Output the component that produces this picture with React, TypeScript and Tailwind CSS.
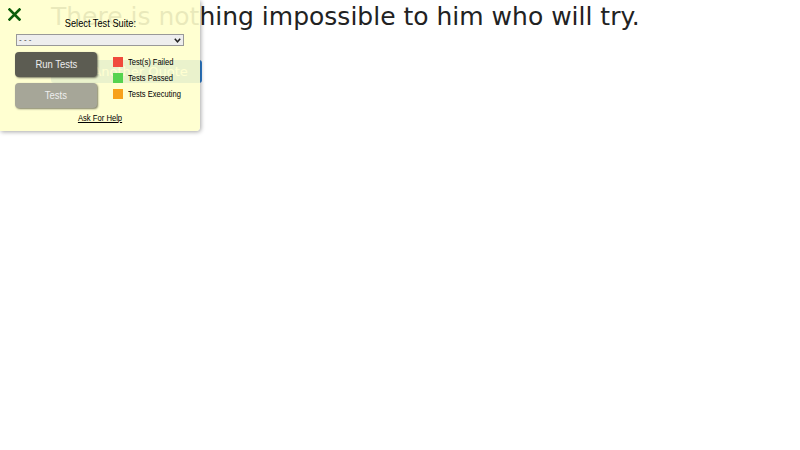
export default function App() {
  return (
    <div className="relative min-h-[450px] bg-white">
      {/* page content behind the test panel */}
      <div className="pl-[51px] pt-[1px]">
        <h1 className="text-[25px] leading-[32px] text-[#222222] font-['DejaVu_Sans',sans-serif]">
          There is nothing impossible to him who will try.
        </h1>
        <button className="mt-[27px] w-[151px] h-[23px] rounded-[3px] bg-[#2f7fd1] text-white text-[13px] font-['DejaVu_Sans',sans-serif]">
          Get Another Quote
        </button>
      </div>

      {/* test runner panel, text is a condensed arial */}
      <div className="absolute left-0 top-0 w-[200px] h-[131px] bg-[#ffffcc]/90 rounded-br-[4px] shadow-[1px_1px_4px_rgba(0,0,0,0.35)] font-['Liberation_Sans',Arial,sans-serif]">
        <svg className="absolute left-[8px] top-[8px]" width="13" height="13" viewBox="0 0 13 13">
          <path d="M1.5 1.5 L11.5 11.5 M11.5 1.5 L1.5 11.5" stroke="#0b5e0b" strokeWidth="2.6" strokeLinecap="square" />
        </svg>
        <div className="pt-[17px] text-center text-[11px] leading-[13px] text-black">
          <span className="inline-block scale-x-[0.84]">Select Test Suite:</span>
        </div>
        <div className="mt-[4px] mx-[16px] h-[12px] border border-[#999999] bg-[#eeeeee] flex items-center justify-between px-[2px]">
          <span className="text-[8px] leading-[8px] text-[#333333]">- - -</span>
          <svg width="7" height="5" viewBox="0 0 7 5">
            <path d="M0.8 0.8 L3.5 3.8 L6.2 0.8" stroke="#222" strokeWidth="1.5" fill="none" />
          </svg>
        </div>
        <div className="mt-[6px] flex pl-[15px] gap-[16px]">
          <div className="flex flex-col gap-[6px]">
            <button className="w-[82px] h-[25px] rounded-[4px] bg-[#5c5c52] text-[#eeeeee] text-[11px] shadow-[1px_1px_2px_rgba(0,0,0,0.5)]">
              <span className="inline-block scale-x-[0.86]">Run Tests</span>
            </button>
            <button className="w-[82px] h-[25px] rounded-[4px] bg-[#a6a698] text-[#eeeeee] text-[11px] shadow-[1px_1px_2px_rgba(0,0,0,0.5)]">
              <span className="inline-block scale-x-[0.86]">Tests</span>
            </button>
          </div>
          <div className="flex flex-col gap-[6px] pt-[5px] text-[9px] leading-[10px] text-black">
            <div className="flex items-center gap-[5px]">
              <span className="w-[10px] h-[10px] bg-[#f04a3c]" />
              <span className="inline-block origin-left scale-x-[0.84]">Test(s) Failed</span>
            </div>
            <div className="flex items-center gap-[5px]">
              <span className="w-[10px] h-[10px] bg-[#55d34f]" />
              <span className="inline-block origin-left scale-x-[0.84]">Tests Passed</span>
            </div>
            <div className="flex items-center gap-[5px]">
              <span className="w-[10px] h-[10px] bg-[#f7a11b]" />
              <span className="inline-block origin-left scale-x-[0.84]">Tests Executing</span>
            </div>
          </div>
        </div>
        <div className="mt-[5px] text-center text-[9px] leading-[10px] text-black">
          <span className="inline-block underline scale-x-[0.85]">Ask For Help</span>
        </div>
      </div>
    </div>
  );
}
